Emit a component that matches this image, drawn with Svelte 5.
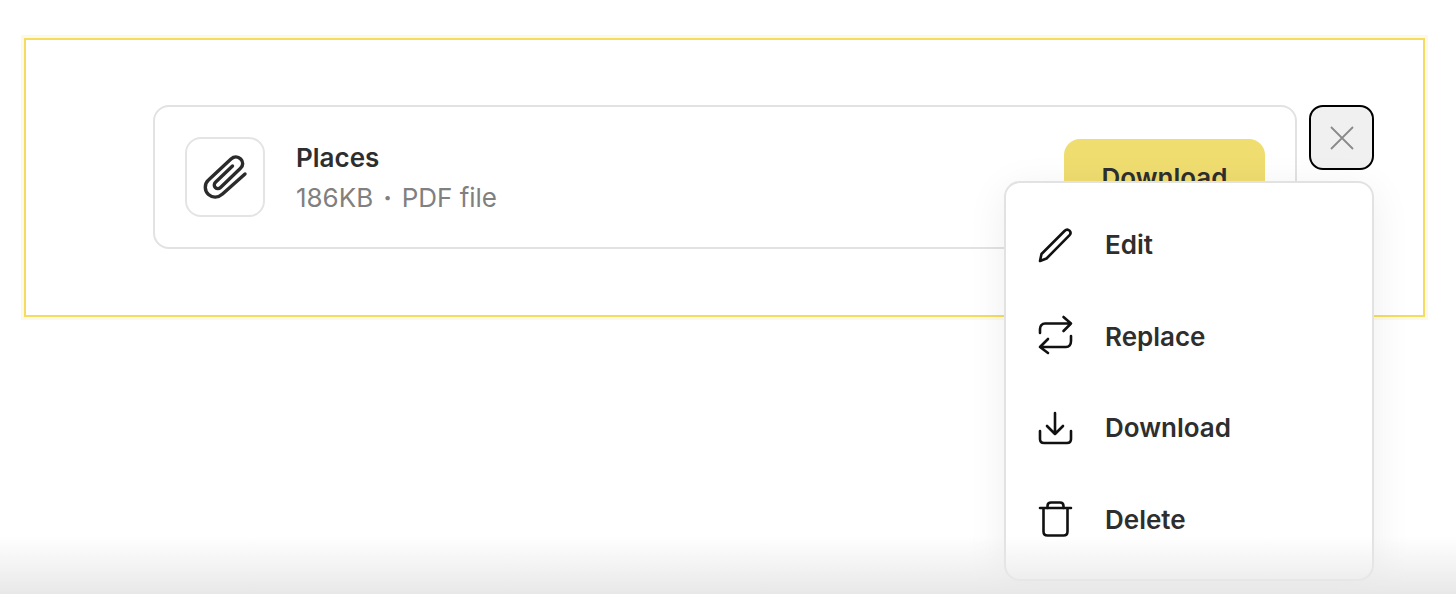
<script lang="ts">
  const actions = [
    { label: "Edit", icon: "edit" },
    { label: "Replace", icon: "replace" },
    { label: "Download", icon: "download" },
    { label: "Delete", icon: "delete" }
  ];
</script>

<div class="page">
  <div class="frame">
    <div class="file-card">
      <div class="file-icon">
        <svg width="48" height="48" viewBox="0 0 48 48" fill="none" stroke="#2b2b2b" stroke-width="3.400" stroke-linecap="round" stroke-linejoin="round">
          <path d="M44 21 21.500 41c-4.500 4-10 4-14 .5S3 31 7.500 27L30 6c3-2.700 7-2.700 9.700 0s2.700 6.500-.2 9.200L19.500 34.500c-1.500 1.400-3.800 1.400-5.200 0s-1.400-3.700 .2-5.200L31.500 13" />
        </svg>
      </div>
      <div class="file-info">
        <div class="file-name">Places</div>
        <div class="file-meta"><span>186KB</span><span class="dot">·</span><span>PDF file</span></div>
      </div>
      <button class="download-btn">Download</button>
    </div>
    <div class="side">
      <button class="close-btn" aria-label="Close">
        <svg width="26" height="26" viewBox="0 0 26 26" fill="none" stroke="#8a8a8a" stroke-width="1.800">
          <path d="M2 2 24 24M24 2 2 24" />
        </svg>
      </button>
      <div class="menu">
        {#each actions as action}
          <div class="menu-item">
            <svg class="menu-icon" width="36" height="36" viewBox="0 0 36 36" fill="none" stroke="#111" stroke-width="2.600" stroke-linecap="round" stroke-linejoin="round">
              {#if action.icon === "edit"}
                <path d="M3 34 4.500 27 27.500 4c1.700-1.700 3.500-1.800 5-.3s1.300 3.300-.4 5L9.500 31.500Z" />
              {:else if action.icon === "replace"}
                <path d="M3 15v-4c0-3 2-5.500 5-5.500h26M26.500 -1 34 5.500 26.500 13" />
                <path d="M34 18v5c0 3.500-2 6-5 6H3M11 21 3 29 11 35" />
              {:else if action.icon === "download"}
                <path d="M18 3v21M10 16l8 8 8-8" />
                <path d="M3 21v8c0 2.500 1.500 4 4 4h23c2.500 0 4-1.500 4-4v-8" />
              {:else}
                <path d="M3 7h31M6.500 7v23.500c0 2.500 1.500 4 4 4h16c2.500 0 4-1.500 4-4V7" />
                <path d="M10.500 7V5c0-2.500 1.500-3.500 3.500-3.500h9c2 0 3.500 1 3.500 3.500v2" />
              {/if}
            </svg>
            <span>{action.label}</span>
          </div>
        {/each}
      </div>
    </div>
  </div>
  <div class="bottom-fade"></div>
</div>

<style>
  :global(body) {
    margin: 0;
    background: #fff;
    font-family: Inter, "Liberation Sans", sans-serif;
  }
  .page {
    position: relative;
    height: 594px;
    overflow: hidden;
    padding: 38px 30px 0 24px;
    box-sizing: border-box;
  }
  .frame {
    width: 1401px;
    height: 279px;
    box-sizing: border-box;
    border: 2px solid #f5dc60;
    outline: 3px solid #fdf9e8;
    display: flex;
    align-items: flex-start;
    gap: 12px;
    padding: 65px 0 0 127px;
  }
  .file-card {
    width: 1144px;
    height: 144px;
    box-sizing: border-box;
    flex: none;
    border: 2px solid #e2e2e2;
    border-radius: 16px;
    display: flex;
    align-items: center;
    padding: 0 30px;
    background: #fff;
  }
  .file-icon {
    width: 80px;
    height: 80px;
    box-sizing: border-box;
    flex: none;
    border: 2px solid #e4e4e4;
    border-radius: 16px;
    display: flex;
    align-items: center;
    justify-content: center;
  }
  .file-info {
    flex: 1;
    margin-left: 31px;
    padding-top: 2px;
  }
  .file-name {
    font-size: 26px;
    font-weight: 600;
    line-height: 40px;
    color: #2e2e2e;
  }
  .file-meta {
    font-size: 26px;
    line-height: 40px;
    color: #808080;
    display: flex;
    gap: 10px;
    letter-spacing: -0.03px;
  }
  .dot {
    font-weight: 700;
  }
  .download-btn {
    width: 201px;
    height: 78px;
    margin-top: 1px;
    flex: none;
    border: 0;
    border-radius: 16px;
    background: #f0dd70;
    color: #2e2e2e;
    font: 600 26px Inter, "Liberation Sans", sans-serif;
  }
  .side {
    position: relative;
    flex: none;
  }
  .close-btn {
    width: 65px;
    height: 65px;
    box-sizing: border-box;
    padding: 0;
    border: 2px solid #000;
    border-radius: 14px;
    background: #f0f0f0;
    display: flex;
    align-items: center;
    justify-content: center;
  }
  .menu {
    position: absolute;
    top: 76px;
    right: 0;
    width: 370px;
    height: 400px;
    box-sizing: border-box;
    border: 2px solid #e2e2e2;
    border-radius: 16px;
    background: #fff;
    box-shadow: 0 8px 40px rgba(0, 0, 0, 0.07);
    padding: 16px 0 14px;
    display: flex;
    flex-direction: column;
    z-index: 2;
  }
  .menu-item {
    height: 91.500px;
    display: flex;
    align-items: center;
    gap: 32px;
    padding-left: 31px;
    font-size: 26px;
    font-weight: 600;
    color: #2e2e2e;
  }
  .menu-icon {
    flex: none;
    overflow: visible;
  }
  .bottom-fade {
    position: absolute;
    left: 0;
    right: 0;
    bottom: 0;
    height: 58px;
    background: linear-gradient(to bottom, rgba(232, 232, 232, 0), rgba(232, 232, 232, 1));
    pointer-events: none;
    z-index: 3;
  }
</style>
